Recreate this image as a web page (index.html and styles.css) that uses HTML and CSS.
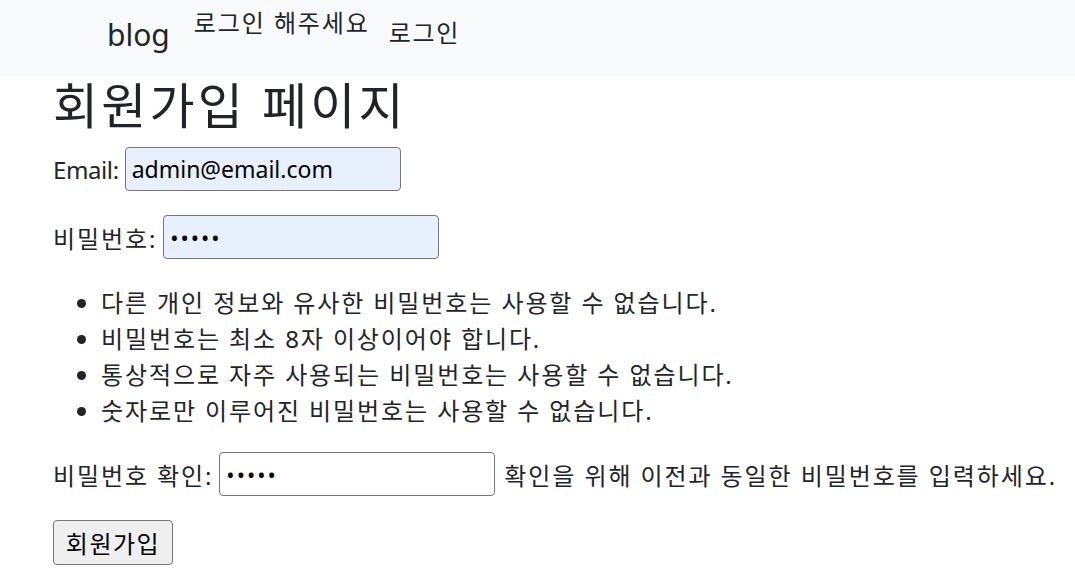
FILE: index.html
```html
<!DOCTYPE html>
<html lang="ko">
<head>
<meta charset="utf-8">
<title>회원가입</title>
<link rel="stylesheet" href="styles.css">
</head>
<body>
<nav class="navbar">
  <a class="brand" href="#">blog</a>
  <span class="nav-text">로그인 해주세요</span>
  <a class="nav-link" href="#">로그인</a>
</nav>
<main class="content">
  <h1 class="title">회원가입 페이지</h1>
  <form class="signup">
    <p class="row">
      <label class="latin" for="email">Email:</label>
      <input id="email" class="field autofill" type="text" value="admin@email.com">
    </p>
    <p class="row">
      <label for="pw1">비밀번호:</label>
      <input id="pw1" class="field autofill secret" type="password" value="admin">
    </p>
    <ul class="rules">
      <li>다른 개인 정보와 유사한 비밀번호는 사용할 수 없습니다.</li>
      <li>비밀번호는 최소 8자 이상이어야 합니다.</li>
      <li>통상적으로 자주 사용되는 비밀번호는 사용할 수 없습니다.</li>
      <li>숫자로만 이루어진 비밀번호는 사용할 수 없습니다.</li>
    </ul>
    <p class="row">
      <label for="pw2">비밀번호 확인:</label>
      <input id="pw2" class="field secret" type="password" value="admin">
      <span class="help">확인을 위해 이전과 동일한 비밀번호를 입력하세요.</span>
    </p>
    <button class="submit" type="button">회원가입</button>
  </form>
</main>
</body>
</html>
```
FILE: styles.css
```css
html, body {
  margin: 0;
  padding: 0;
}
body {
  font-family: "Noto Sans", "Noto Sans CJK KR", sans-serif;
  font-size: 24px;
  color: #212529;
  background: #fff;
  overflow: hidden;
  letter-spacing: 1.9px;
}
.navbar {
  display: flex;
  align-items: flex-start;
  height: 76px;
  background: #f8f9fa;
  padding-left: 107px;
  box-sizing: border-box;
}
.brand {
  font-size: 30px;
  line-height: 36px;
  margin-top: 17px;
  color: #212529;
  text-decoration: none;
  letter-spacing: 0;
}
.nav-text {
  line-height: 36px;
  margin-top: 5px;
  margin-left: 24px;
  letter-spacing: 1.9px;
}
.nav-link {
  line-height: 36px;
  margin-top: 15px;
  margin-left: 19px;
  color: #212529;
  text-decoration: none;
  letter-spacing: 1.7px;
}
.content {
  padding-left: 53px;
}
.title {
  font-size: 49px;
  font-weight: 400;
  line-height: 59px;
  margin: 0 0 12px;
  letter-spacing: 3.2px;
}
.signup {
  margin: 0;
}
.row {
  display: flex;
  align-items: center;
  gap: 6px;
  height: 44px;
  margin: 0 0 24px;
  white-space: nowrap;
}
.latin {
  letter-spacing: -0.4px;
}
.field {
  width: 276px;
  height: 44px;
  box-sizing: border-box;
  border: 1px solid #767676;
  border-radius: 4px;
  padding: 0 6px;
  font-family: "Noto Sans", "Noto Sans CJK KR", sans-serif;
  font-size: 23px;
  letter-spacing: 0;
  color: #000;
  background: #fff;
  margin: 0;
}
.field.secret {
  letter-spacing: 2px;
  font-size: 22px;
}
.field.autofill {
  background: #e8f0fe;
}
.help {
  margin-left: 3px;
}
.rules {
  margin: 0 0 23px;
  padding: 2px 0 0 48px;
  line-height: 36px;
}
.submit {
  display: block;
  width: 120px;
  height: 45px;
  padding: 0;
  margin-top: 1px;
  border: 1px solid #767676;
  border-radius: 4px;
  background: #efefef;
  color: #000;
  font-family: "Noto Sans", "Noto Sans CJK KR", sans-serif;
  font-size: 24px;
  letter-spacing: 1.5px;
}
```
